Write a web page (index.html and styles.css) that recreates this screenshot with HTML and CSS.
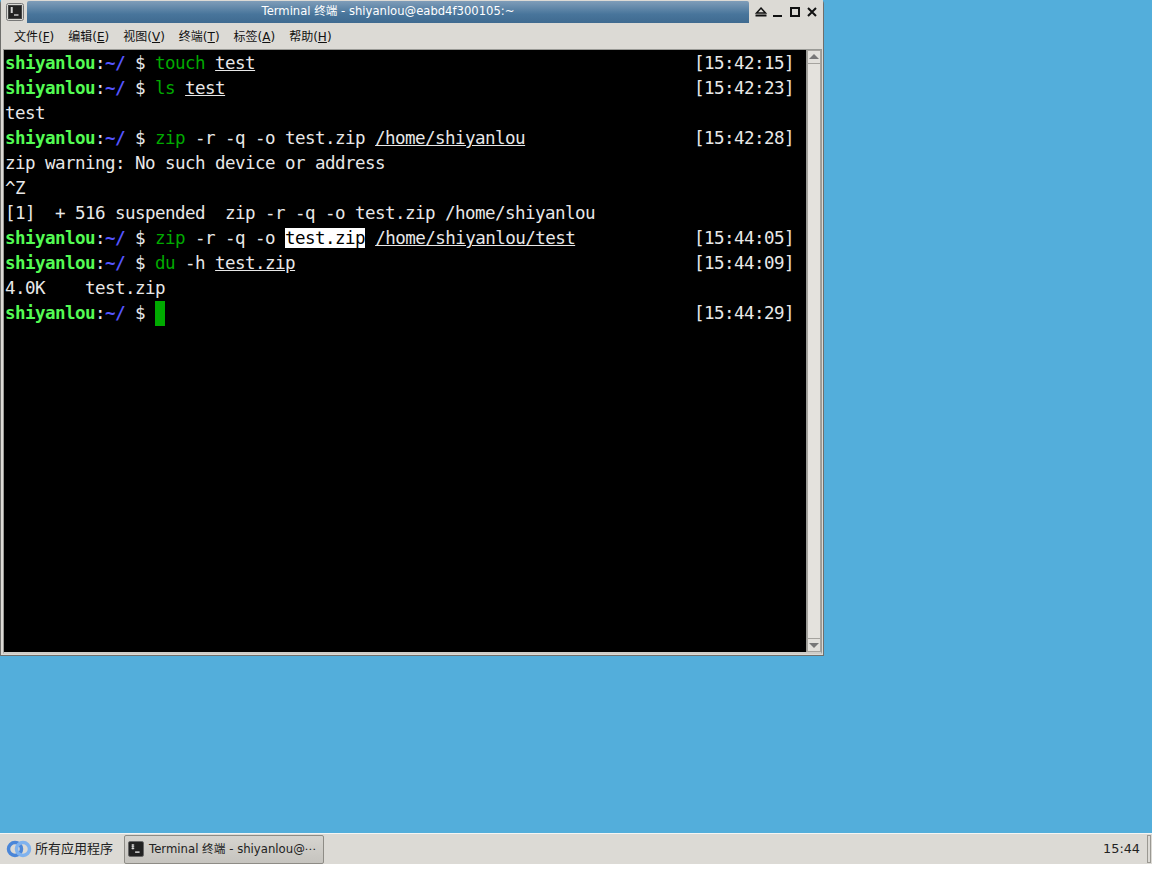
FILE: index.html
```html
<!DOCTYPE html>
<html lang="zh">
<head>
<meta charset="utf-8">
<title>Terminal</title>
<link rel="stylesheet" href="styles.css">
</head>
<body>
<div class="desktop">
  <div class="window">
    <div class="titlebar">
      <div class="win-icon"><svg width="18" height="18" viewBox="0 0 18 18"><rect x="0.5" y="0.5" width="17" height="17" rx="2" fill="#d8d8d4" stroke="#777"/><rect x="2.500" y="2.500" width="13" height="13" fill="#222" stroke="#444"/><path d="M4.500 5h2.500M4.500 7h2.500M4.500 9h2.500M5.750 4v6" stroke="#eee"/><path d="M8 12h4.500" stroke="#eee" stroke-width="1.200"/></svg></div>
      <div class="title"><span class="title-text">Terminal 终端 - shiyanlou@eabd4f300105:~</span></div>
      <div class="win-buttons">
        <svg width="14" height="14" viewBox="0 0 14 14"><path d="M7 3l4.500 5h-9z" fill="none" stroke="#111" stroke-width="1.500"/><path d="M1.500 10.500h11" stroke="#111" stroke-width="2"/></svg>
        <svg width="14" height="14" viewBox="0 0 14 14"><path d="M2 11h9" stroke="#111" stroke-width="2"/></svg>
        <svg width="14" height="14" viewBox="0 0 14 14"><rect x="3" y="3" width="8" height="8" fill="none" stroke="#111" stroke-width="2"/></svg>
        <svg width="14" height="14" viewBox="0 0 14 14"><path d="M3 3l8 8M11 3l-8 8" stroke="#111" stroke-width="2"/></svg>
      </div>
    </div>
    <div class="menubar">
      <span class="menu">文件(<u>F</u>)</span>
      <span class="menu">编辑(<u>E</u>)</span>
      <span class="menu">视图(<u>V</u>)</span>
      <span class="menu">终端(<u>T</u>)</span>
      <span class="menu">标签(<u>A</u>)</span>
      <span class="menu">帮助(<u>H</u>)</span>
    </div>
    <div class="term-area">
      <div class="terminal">
        <div class="row"><span><b class="user">shiyanlou</b><span class="colon">:</span><b class="path">~/</b> $ <span class="cmd">touch</span> <u>test</u></span><span>[15:42:15]</span></div>
        <div class="row"><span><b class="user">shiyanlou</b><span class="colon">:</span><b class="path">~/</b> $ <span class="cmd">ls</span> <u>test</u></span><span>[15:42:23]</span></div>
        <div class="row"><span>test</span></div>
        <div class="row"><span><b class="user">shiyanlou</b><span class="colon">:</span><b class="path">~/</b> $ <span class="cmd">zip</span> -r -q -o test.zip <u>/home/shiyanlou</u></span><span>[15:42:28]</span></div>
        <div class="row"><span>zip warning: No such device or address</span></div>
        <div class="row"><span>^Z</span></div>
        <div class="row"><span>[1]  + 516 suspended  zip -r -q -o test.zip /home/shiyanlou</span></div>
        <div class="row"><span><b class="user">shiyanlou</b><span class="colon">:</span><b class="path">~/</b> $ <span class="cmd">zip</span> -r -q -o <span class="sel">test.zip</span> <u>/home/shiyanlou/test</u></span><span>[15:44:05]</span></div>
        <div class="row"><span><b class="user">shiyanlou</b><span class="colon">:</span><b class="path">~/</b> $ <span class="cmd">du</span> -h <u>test.zip</u></span><span>[15:44:09]</span></div>
        <div class="row"><span>4.0K    test.zip</span></div>
        <div class="row"><span><b class="user">shiyanlou</b><span class="colon">:</span><b class="path">~/</b> $ <span class="cursor"> </span></span><span>[15:44:29]</span></div>
      </div>
      <div class="scrollbar">
        <div class="arrow"><svg width="12" height="8" viewBox="0 0 12 8"><path d="M6 1l5 5H1z" fill="#777"/></svg></div>
        <div class="thumb"></div>
        <div class="arrow"><svg width="12" height="8" viewBox="0 0 12 8"><path d="M1 2h10L6 7z" fill="#777"/></svg></div>
      </div>
    </div>
  </div>
</div>
<div class="panel">
  <div class="apps">
    <svg width="26" height="18" viewBox="0 0 26 18"><circle cx="9" cy="9" r="6.500" fill="none" stroke="#4a86d8" stroke-width="3.500"/><circle cx="17" cy="9" r="6.500" fill="none" stroke="#7fb2ee" stroke-width="3.500"/></svg>
    <span>所有应用程序</span>
  </div>
  <div class="task">
    <svg width="16" height="16" viewBox="0 0 18 18"><rect x="0.500" y="0.500" width="17" height="17" rx="2" fill="#222" stroke="#666"/><path d="M4 4.500h3M4 6.500h3M4 8.500h3M5.500 3.500v6" stroke="#eee"/><path d="M8 12.500h5" stroke="#eee" stroke-width="1.500"/></svg>
    <span class="task-text">Terminal 终端 - shiyanlou@⋯</span>
  </div>
  <div class="clock">15:44</div>
  <div class="handle"></div>
</div>
</body>
</html>
```
FILE: styles.css
```css
* { box-sizing: border-box; }
html, body { margin: 0; height: 100%; background: #fff; overflow: hidden; }
body { font-family: "Liberation Sans", "Noto Sans CJK SC", sans-serif; }
.desktop { position: relative; height: 833px; background: #53aedb; }
.window {
  position: absolute; left: 0; top: 0; width: 824px; height: 656px;
  background: #dcdad5; border: 1px solid #6f6f6c; border-top: 0; border-radius: 4px 4px 0 0;
  display: flex; flex-direction: column;
  padding: 0 0 0 1px;
}
.titlebar { height: 23px; display: flex; align-items: stretch; flex: none; margin-left: -1px; }
.win-icon { width: 26px; display: flex; align-items: center; justify-content: center; padding-left: 1px; background: #dcdad5; }
.title {
  flex: 1; margin-top: 1px; background: linear-gradient(#7f9db9, #48759b 60%, #3f6a90);
  color: #fff; text-align: center; font: 11.600px/21px "DejaVu Sans", "Noto Sans CJK SC", sans-serif;
  border-radius: 2px 2px 0 0;
}
.win-buttons { width: 74px; display: flex; align-items: center; gap: 3px; padding-left: 5px; background: #dcdad5; }
.menubar { height: 26px; flex: none; display: flex; align-items: center; gap: 14px; padding: 2px 0 0 12px; font: 12px/16px "DejaVu Sans", "Noto Sans CJK SC", sans-serif; color: #111; }
.term-area { flex: 1; display: flex; margin: 0 1px 1px 1px; border: 1px solid #9a9a96; border-bottom: 2px solid #cfcdc8; min-height: 0; }
.terminal {
  flex: 1; background: #000; color: #e8e8e8; padding: 1px 12px 0 1px;
  font: 17.500px/25px "DejaVu Sans Mono", monospace; letter-spacing: -0.535px;
}
.row { height: 25px; display: flex; justify-content: space-between; white-space: pre; }
.row b { font-weight: bold; }
.user { color: #54fc54; }
.colon { color: #e8e8e8; }
.path { color: #5555ff; font-weight: bold; }
.cmd { color: #00aa00; }
.sel { background: #fff; color: #000; }
.cursor { display: inline-block; width: 10px; height: 25px; background: #00aa00; vertical-align: top; }
.scrollbar { width: 15px; flex: none; background: #dcdad5; border-left: 1px solid #9a9a96; display: flex; flex-direction: column; }
.arrow { height: 14px; display: flex; align-items: center; justify-content: center; border: 1px solid #a5a39e; background: #e2e0db; flex: none; }
.thumb { flex: 1; background: #e4e2dd; border: 1px solid #a5a39e; border-top: 0; border-bottom: 0; }
.panel {
  height: 31px; background: #dcdad5; border-top: 1px solid #f5f5f3; display: flex; align-items: center;
  font: 13px/16px "DejaVu Sans", "Noto Sans CJK SC", sans-serif; color: #222;
}
.apps { display: flex; align-items: center; gap: 3px; padding-left: 6px; width: 124px; flex: none; }
.task { width: 200px; height: 29px; flex: none; display: flex; align-items: center; gap: 5px; padding-left: 3px; border: 1px solid #8e8c86; border-radius: 2px; background: linear-gradient(#d6d4cf, #c6c4bf); }
.task-text { white-space: nowrap; font-size: 11.700px; }
.clock { margin-left: auto; padding-right: 7px; font-size: 12.800px; }
.handle { width: 4px; height: 28px; border: 1px solid #9a9892; margin-right: 1px; }
```
